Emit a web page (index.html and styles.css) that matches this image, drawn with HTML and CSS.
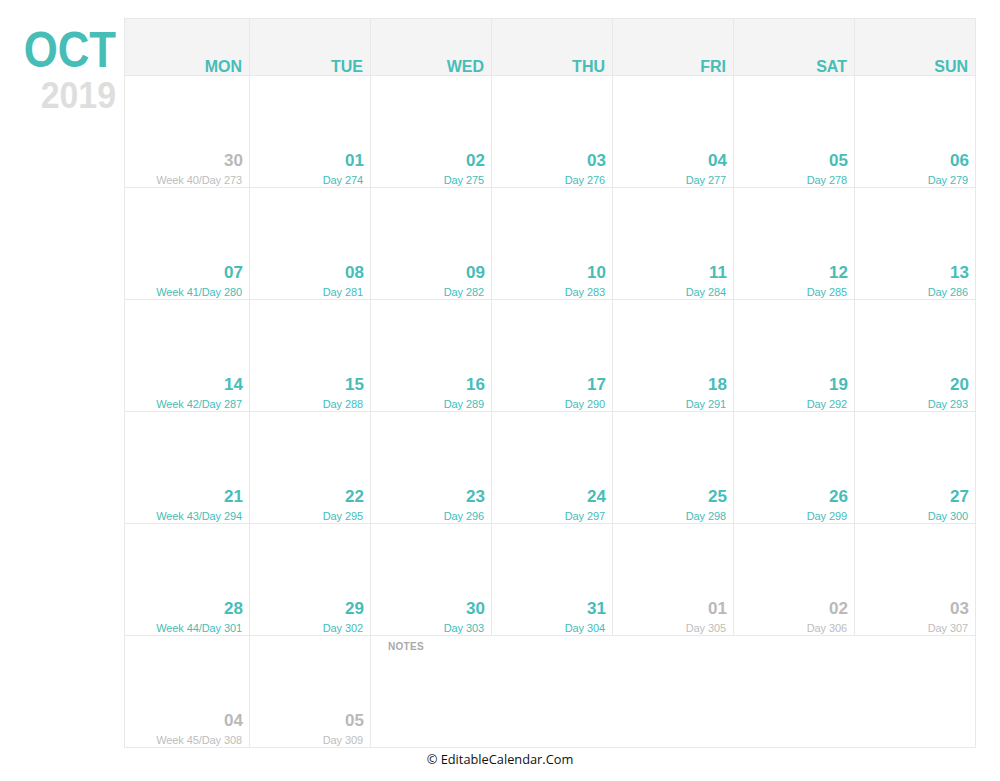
FILE: index.html
```html
<!DOCTYPE html>
<html>
<head>
<meta charset="utf-8">
<link rel="stylesheet" href="styles.css">
</head>
<body>
<div class="page">
  <div class="title">
    <div class="month">OCT</div>
    <div class="year">2019</div>
  </div>
  <div class="cal">
    <div class="hd">MON</div><div class="hd">TUE</div><div class="hd">WED</div><div class="hd">THU</div><div class="hd">FRI</div><div class="hd">SAT</div><div class="hd">SUN</div>

    <div class="cell off"><div class="num">30</div><div class="sub">Week 40/Day 273</div></div>
    <div class="cell"><div class="num">01</div><div class="sub">Day 274</div></div>
    <div class="cell"><div class="num">02</div><div class="sub">Day 275</div></div>
    <div class="cell"><div class="num">03</div><div class="sub">Day 276</div></div>
    <div class="cell"><div class="num">04</div><div class="sub">Day 277</div></div>
    <div class="cell"><div class="num">05</div><div class="sub">Day 278</div></div>
    <div class="cell"><div class="num">06</div><div class="sub">Day 279</div></div>

    <div class="cell"><div class="num">07</div><div class="sub">Week 41/Day 280</div></div>
    <div class="cell"><div class="num">08</div><div class="sub">Day 281</div></div>
    <div class="cell"><div class="num">09</div><div class="sub">Day 282</div></div>
    <div class="cell"><div class="num">10</div><div class="sub">Day 283</div></div>
    <div class="cell"><div class="num">11</div><div class="sub">Day 284</div></div>
    <div class="cell"><div class="num">12</div><div class="sub">Day 285</div></div>
    <div class="cell"><div class="num">13</div><div class="sub">Day 286</div></div>

    <div class="cell"><div class="num">14</div><div class="sub">Week 42/Day 287</div></div>
    <div class="cell"><div class="num">15</div><div class="sub">Day 288</div></div>
    <div class="cell"><div class="num">16</div><div class="sub">Day 289</div></div>
    <div class="cell"><div class="num">17</div><div class="sub">Day 290</div></div>
    <div class="cell"><div class="num">18</div><div class="sub">Day 291</div></div>
    <div class="cell"><div class="num">19</div><div class="sub">Day 292</div></div>
    <div class="cell"><div class="num">20</div><div class="sub">Day 293</div></div>

    <div class="cell"><div class="num">21</div><div class="sub">Week 43/Day 294</div></div>
    <div class="cell"><div class="num">22</div><div class="sub">Day 295</div></div>
    <div class="cell"><div class="num">23</div><div class="sub">Day 296</div></div>
    <div class="cell"><div class="num">24</div><div class="sub">Day 297</div></div>
    <div class="cell"><div class="num">25</div><div class="sub">Day 298</div></div>
    <div class="cell"><div class="num">26</div><div class="sub">Day 299</div></div>
    <div class="cell"><div class="num">27</div><div class="sub">Day 300</div></div>

    <div class="cell"><div class="num">28</div><div class="sub">Week 44/Day 301</div></div>
    <div class="cell"><div class="num">29</div><div class="sub">Day 302</div></div>
    <div class="cell"><div class="num">30</div><div class="sub">Day 303</div></div>
    <div class="cell"><div class="num">31</div><div class="sub">Day 304</div></div>
    <div class="cell off"><div class="num">01</div><div class="sub">Day 305</div></div>
    <div class="cell off"><div class="num">02</div><div class="sub">Day 306</div></div>
    <div class="cell off"><div class="num">03</div><div class="sub">Day 307</div></div>

    <div class="cell off"><div class="num">04</div><div class="sub">Week 45/Day 308</div></div>
    <div class="cell off"><div class="num">05</div><div class="sub">Day 309</div></div>
    <div class="notes"><div class="notes-label">NOTES</div></div>
  </div>
</div>
<div class="footer">© EditableCalendar.Com</div>
</body>
</html>
```
FILE: styles.css
```css
html, body {
  margin: 0;
  padding: 0;
  background: #fff;
}
body {
  font-family: "Liberation Sans", Arial, sans-serif;
}
.page {
  display: flex;
  padding-top: 18px;
}
.title {
  width: 116px;
  padding-right: 8px;
  text-align: right;
  font-weight: bold;
}
.month {
  color: #47bdb8;
  font-size: 50px;
  line-height: 50px;
  margin-top: 7px;
  transform: scaleX(0.875);
  transform-origin: right center;
}
.year {
  color: #dedede;
  font-size: 36px;
  line-height: 36px;
  margin-top: 3px;
  transform: scaleX(0.94);
  transform-origin: right center;
}
.cal {
  display: grid;
  grid-template-columns: 125px repeat(6, 121px);
  grid-template-rows: 57px repeat(6, 112px);
  border-top: 1px solid #e8e8e8;
  border-left: 1px solid #e8e8e8;
  width: 851px;
}
.hd {
  background: #f4f4f4;
  color: #47bdb8;
  font-weight: bold;
  font-size: 16px;
  line-height: 16px;
  display: flex;
  align-items: flex-end;
  justify-content: flex-end;
  padding: 0 7px 0 0;
  border-right: 1px solid #e8e8e8;
  border-bottom: 1px solid #e8e8e8;
}
.cell {
  display: flex;
  flex-direction: column;
  align-items: flex-end;
  justify-content: flex-end;
  padding: 0 6px 0 0;
  border-right: 1px solid #e8e8e8;
  border-bottom: 1px solid #e8e8e8;
  color: #47bdb8;
}
.num {
  font-weight: bold;
  font-size: 17px;
  line-height: 20px;
  margin-bottom: 1px;
}
.sub {
  font-size: 11px;
  line-height: 13px;
  margin-top: 2px;
  margin-right: 1px;
  letter-spacing: -0.1px;
}
.off {
  color: #b9b9b9;
}
.off .sub {
  color: #bdbdbd;
}
.notes {
  grid-column: 3 / 8;
  border-right: 1px solid #e8e8e8;
  border-bottom: 1px solid #e8e8e8;
  padding: 5px 0 0 17px;
}
.notes-label {
  color: #aaaaaa;
  font-size: 10px;
  font-weight: bold;
  letter-spacing: 0.3px;
}
.footer {
  width: 1000px;
  text-align: center;
  font-family: "Open Sans", "Noto Sans", sans-serif;
  font-size: 12.8px;
  color: #111;
  margin-top: 2px;
}
```
